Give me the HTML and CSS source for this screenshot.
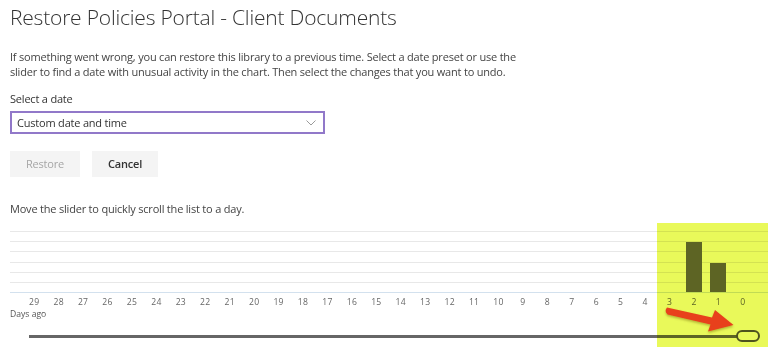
FILE: index.html
```html
<!DOCTYPE html>
<html lang="en">
<head>
<meta charset="utf-8">
<title>Restore</title>
<link rel="stylesheet" href="styles.css">
</head>
<body>
<div class="page">
  <h1 class="title">Restore Policies Portal - Client Documents</h1>
  <p class="intro">If something went wrong, you can restore this library to a previous time. Select a date preset or use the<br>slider to find a date with unusual activity in the chart. Then select the changes that you want to undo.</p>
  <div class="field-label">Select a date</div>
  <div class="select">
    <span>Custom date and time</span>
    <svg class="chev" width="10" height="6" viewBox="0 0 10 6"><path d="M0.5 0.5 L5 5 L9.5 0.5" fill="none" stroke="#9a9a9a" stroke-width="1"/></svg>
  </div>
  <div class="actions">
    <button class="btn btn-disabled" disabled>Restore</button>
    <button class="btn">Cancel</button>
  </div>
  <p class="hint">Move the slider to quickly scroll the list to a day.</p>
  <div class="chart">
    <div class="plot">
      <div class="cols bars">
        <span></span><span></span><span></span><span></span><span></span><span></span><span></span><span></span><span></span><span></span>
        <span></span><span></span><span></span><span></span><span></span><span></span><span></span><span></span><span></span><span></span>
        <span></span><span></span><span></span><span></span><span></span><span></span><span></span>
        <span><i class="bar bar-2"></i></span><span><i class="bar bar-1"></i></span><span></span>
      </div>
    </div>
    <div class="cols axis">
      <span>29</span><span>28</span><span>27</span><span>26</span><span>25</span><span>24</span><span>23</span><span>22</span><span>21</span><span>20</span>
      <span>19</span><span>18</span><span>17</span><span>16</span><span>15</span><span>14</span><span>13</span><span>12</span><span>11</span><span>10</span>
      <span>9</span><span>8</span><span>7</span><span>6</span><span>5</span><span>4</span><span>3</span><span>2</span><span>1</span><span>0</span>
    </div>
    <div class="axis-title">Days ago</div>
    <div class="slider">
      <div class="track"></div>
      <div class="thumb"></div>
    </div>
  </div>
  <div class="highlight"></div>
  <svg class="arrow" width="84" height="44" viewBox="0 0 84 44">
    <defs>
      <filter id="sh" x="-20%" y="-20%" width="140%" height="160%">
        <feDropShadow dx="0" dy="1.5" stdDeviation="1.2" flood-color="#6b5a00" flood-opacity="0.45"/>
      </filter>
    </defs>
    <path d="M7 7.5 L52 17.5 L55 10 L73.5 25 L48 31.5 L50.5 24.5 L7.5 14.5 Q4 11 7 7.5 Z" fill="#e8411b" filter="url(#sh)"/>
  </svg>
</div>
</body>
</html>
```

FILE: styles.css
```css
html, body {
  margin: 0;
  padding: 0;
  background: #ffffff;
}

.page {
  position: relative;
  width: 768px;
  height: 347px;
  overflow: hidden;
  padding: 2px 0 0 10px;
  box-sizing: border-box;
  font-family: "Open Sans", "Liberation Sans", sans-serif;
  color: #333333;
}

.title {
  margin: 0;
  font-size: 21px;
  font-weight: 300;
  line-height: 30px;
  color: #333333;
  letter-spacing: -0.2px;
}

.intro {
  margin: 17px 0 0;
  font-size: 11px;
  line-height: 15px;
  color: #444444;
  letter-spacing: -0.2px;
}

.field-label {
  margin-top: 11.5px;
  font-size: 11px;
  line-height: 16px;
  color: #333333;
  letter-spacing: -0.2px;
}

.select {
  margin-top: 4.5px;
  width: 315px;
  height: 23px;
  box-sizing: border-box;
  border: 2px solid #9178c9;
  display: flex;
  align-items: center;
  justify-content: space-between;
  padding: 0 7px 0 5px;
  font-size: 11px;
  letter-spacing: -0.2px;
  color: #333333;
}

.chev {
  display: block;
}

.actions {
  margin-top: 16.5px;
  display: flex;
  gap: 12px;
}

.btn {
  height: 26px;
  border: none;
  background: #f4f4f4;
  font-family: "Open Sans", "Liberation Sans", sans-serif;
  font-size: 11px;
  letter-spacing: -0.2px;
  font-weight: 600;
  color: #333333;
  padding: 0;
  width: 66px;
}

.btn-disabled {
  width: 70px;
  font-weight: 400;
  color: #a6a6a6;
}

.hint {
  margin: 24px 0 0;
  font-size: 11px;
  letter-spacing: -0.2px;
  line-height: 16px;
  color: #444444;
}

.chart {
  margin-top: 14px;
}

.plot {
  width: 758px;
  height: 62px;
  box-sizing: border-box;
  border-bottom: 1px solid #d3e1ee;
  background: repeating-linear-gradient(to bottom, #e8e8e8 0, #e8e8e8 1px, transparent 1px, transparent 10.2px);
}

.cols {
  display: grid;
  grid-template-columns: repeat(30, 24.45px);
  padding-left: 12px;
}

.bars {
  height: 61px;
  align-items: end;
}

.bars span {
  display: flex;
  justify-content: center;
  align-items: flex-end;
  height: 100%;
}

.bar {
  display: block;
  width: 16px;
  background: #666666;
}

.bar-2 { height: 50px; }
.bar-1 { height: 29px; }

.axis {
  margin-top: 3.5px;
  font-size: 8.6px;
  line-height: 12px;
  color: #666666;
  text-align: center;
  letter-spacing: 0.3px;
}

.axis-title {
  font-size: 8.6px;
  line-height: 12px;
  color: #555555;
}

.slider {
  margin: 10px 0 0 19px;
  width: 731px;
  height: 12px;
  position: relative;
  display: flex;
  align-items: center;
}

.track {
  flex: 1;
  height: 3px;
  background: #666666;
  margin-right: 4px;
}

.thumb {
  position: absolute;
  right: 0;
  top: 0;
  width: 24px;
  height: 12px;
  box-sizing: border-box;
  border: 2px solid #555555;
  border-radius: 7px;
  background: #ffffff;
}

.highlight {
  position: absolute;
  left: 657px;
  top: 223px;
  right: 0;
  bottom: 0;
  background: #e9f95a;
  mix-blend-mode: multiply;
}

.arrow {
  position: absolute;
  left: 660px;
  top: 300px;
}
```
